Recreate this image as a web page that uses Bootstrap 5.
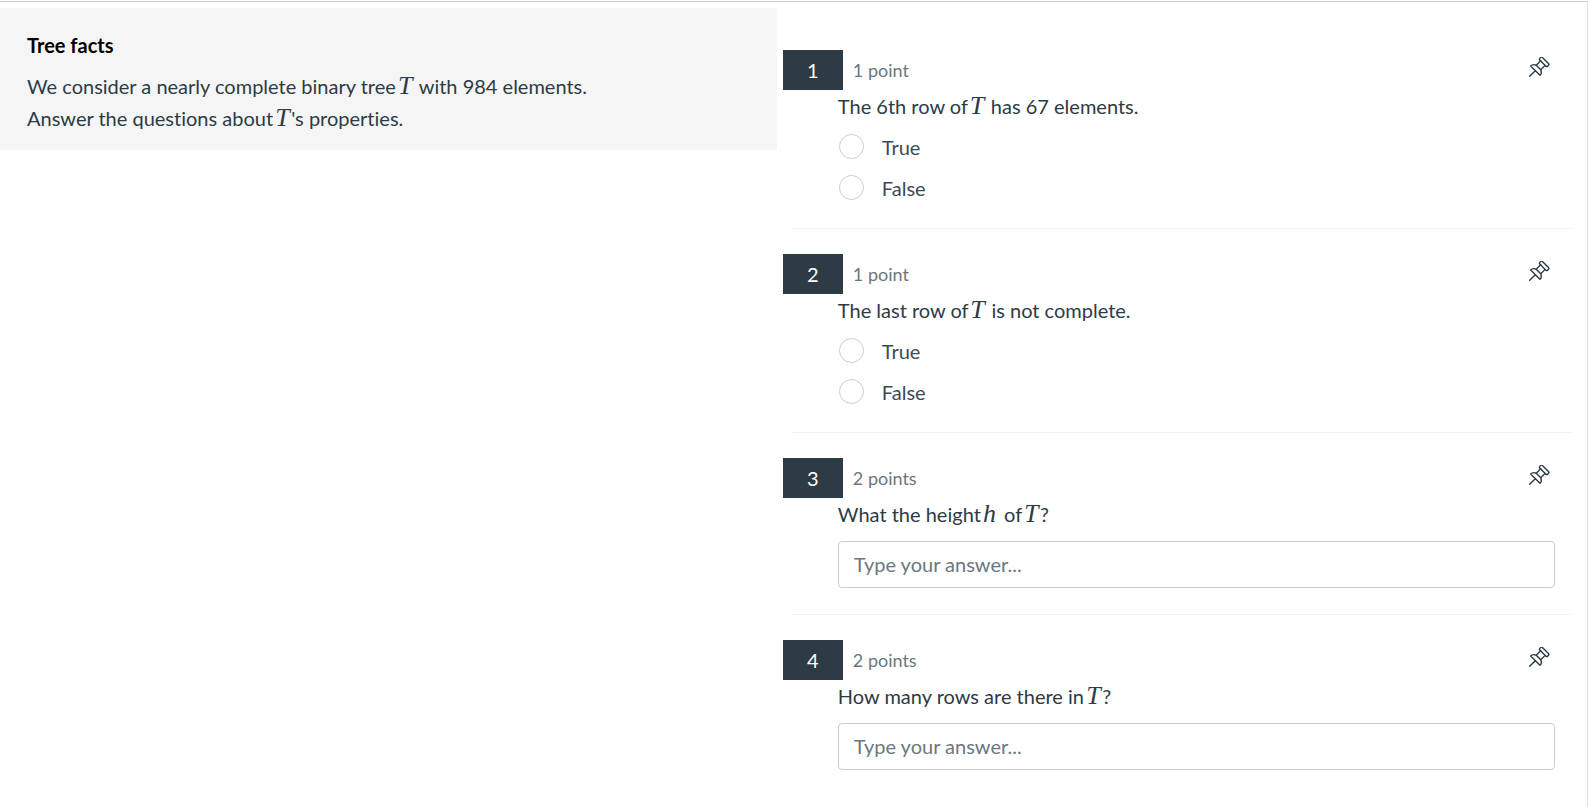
<!DOCTYPE html>
<html lang="en">
<head>
<meta charset="utf-8">
<meta name="viewport" content="width=device-width, initial-scale=1">
<title>Tree facts</title>
<link href="https://cdn.jsdelivr.net/npm/bootstrap@5.3.0/dist/css/bootstrap.min.css" rel="stylesheet">
<style>
  body { font-family: Lato, "Liberation Sans", sans-serif; font-size: 20px; line-height: 32px; color: #2d3b45; background: #fff; font-variant-ligatures: none; }
  .quiz { border-top: 1px solid #c7cdd1; border-right: 1px solid #ddd; margin-top: 1px; }
  .stimulus-col { width: 48.95%; padding-top: 6px; }
  .stimulus { background: #f5f5f5; padding: 21px 27px 16px; }
  .stimulus h1 { font-size: 20px; line-height: 32px; font-weight: 700; color: #000; margin-bottom: 9px; }
  .questions { padding: 23px 15px 0; }
  .question { padding-top: 25px; }
  .question + .question { border-top: 1px solid #f2f2f2; }
  .q-head { margin-left: -9px; height: 40px; }
  .q-num { width: 60px; height: 40px; background: #2d3b45; color: #fff; }
  .q-points { font-size: 18px; color: #6b7780; padding-left: 10px; }
  .q-pin { width: 22px; height: 22px; margin: 0 22px 4px 0; line-height: 1; color: #2d3b45; }
  .q-body { padding: 0 17px 0 46px; }
  .options { padding: 4px 0 20px; }
  .option { height: 41px; padding-left: 1px; gap: 18px; color: #394b58; }
  .option .form-check-input { width: 25px; height: 25px; margin: 0; border-color: #c7cdd1; }
  .answer { height: 47px; margin: 11px 0 26px; padding: 0 15px 2px; font-size: 20px; border-color: #c7cdd1; border-radius: 4px; }
  .answer::placeholder { color: #6b7780; }
  .mathvar { display: inline-block; width: 16px; margin-left: -3px; font: italic 26px/26px "Liberation Serif", serif; }
</style>
</head>
<body>
<svg width="0" height="0" class="position-absolute" aria-hidden="true">
  <symbol id="pin" viewBox="0 0 22 22">
    <g transform="translate(10.5 10.5) rotate(45)" fill="none" stroke="currentColor" stroke-width="1.4" stroke-linejoin="round" stroke-linecap="round">
      <rect x="-5.5" y="-9.8" width="11" height="3.6" rx="1.2"/>
      <path d="M-3.2-6.2V0M3.2-6.2V0M-3.2 0H3.2C5.8 1 6.6 2.8 6.6 4.5H-6.6C-6.6 2.8-5.8 1-3.2 0ZM0 4.5V12.5"/>
    </g>
  </symbol>
</svg>
<main class="quiz d-flex align-items-start min-vh-100">
  <section class="stimulus-col flex-shrink-0">
    <div class="stimulus">
      <h1>Tree facts</h1>
      <p class="m-0">We consider a nearly complete binary tree <i class="mathvar">T</i> with 984 elements.<br>Answer the questions about <i class="mathvar">T</i>'s properties.</p>
    </div>
  </section>
  <form class="questions flex-grow-1">
    <section class="question">
      <div class="q-head d-flex align-items-center">
        <div class="q-num d-flex align-items-center justify-content-center">1</div>
        <div class="q-points">1 point</div>
        <button type="button" class="q-pin btn p-0 border-0 ms-auto d-flex" aria-label="Pin question 1"><svg width="22" height="22"><use href="#pin"/></svg></button>
      </div>
      <div class="q-body">
        <div>The 6th row of <i class="mathvar">T</i> has 67 elements.</div>
        <div class="options">
          <div class="option d-flex align-items-center"><input class="form-check-input" type="radio" name="q1" id="q1t"><label for="q1t">True</label></div>
          <div class="option d-flex align-items-center"><input class="form-check-input" type="radio" name="q1" id="q1f"><label for="q1f">False</label></div>
        </div>
      </div>
    </section>
    <section class="question">
      <div class="q-head d-flex align-items-center">
        <div class="q-num d-flex align-items-center justify-content-center">2</div>
        <div class="q-points">1 point</div>
        <button type="button" class="q-pin btn p-0 border-0 ms-auto d-flex" aria-label="Pin question 2"><svg width="22" height="22"><use href="#pin"/></svg></button>
      </div>
      <div class="q-body">
        <div>The last row of <i class="mathvar">T</i> is not complete.</div>
        <div class="options">
          <div class="option d-flex align-items-center"><input class="form-check-input" type="radio" name="q2" id="q2t"><label for="q2t">True</label></div>
          <div class="option d-flex align-items-center"><input class="form-check-input" type="radio" name="q2" id="q2f"><label for="q2f">False</label></div>
        </div>
      </div>
    </section>
    <section class="question">
      <div class="q-head d-flex align-items-center">
        <div class="q-num d-flex align-items-center justify-content-center">3</div>
        <div class="q-points">2 points</div>
        <button type="button" class="q-pin btn p-0 border-0 ms-auto d-flex" aria-label="Pin question 3"><svg width="22" height="22"><use href="#pin"/></svg></button>
      </div>
      <div class="q-body">
        <label class="d-block" for="q3">What the height <i class="mathvar">h</i> of <i class="mathvar">T</i>?</label>
        <input class="answer form-control" type="text" id="q3" placeholder="Type your answer...">
      </div>
    </section>
    <section class="question">
      <div class="q-head d-flex align-items-center">
        <div class="q-num d-flex align-items-center justify-content-center">4</div>
        <div class="q-points">2 points</div>
        <button type="button" class="q-pin btn p-0 border-0 ms-auto d-flex" aria-label="Pin question 4"><svg width="22" height="22"><use href="#pin"/></svg></button>
      </div>
      <div class="q-body">
        <label class="d-block" for="q4">How many rows are there in <i class="mathvar">T</i>?</label>
        <input class="answer form-control" type="text" id="q4" placeholder="Type your answer...">
      </div>
    </section>
  </form>
</main>
</body>
</html>
